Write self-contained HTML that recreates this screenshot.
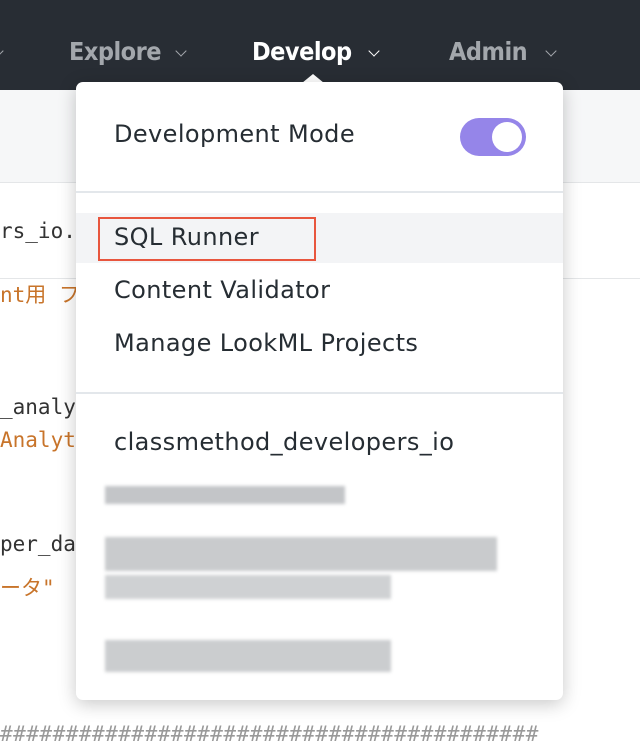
<!DOCTYPE html>
<html><head><meta charset="utf-8"><style>
*{margin:0;padding:0;box-sizing:border-box}
body{width:640px;height:748px;overflow:hidden;background:#fff;font-family:"DejaVu Sans","Liberation Sans",sans-serif;position:relative}
.nav{position:absolute;left:0;top:0;width:640px;height:90px;background:#282d34}
.nv{position:absolute;top:37px;font-size:25px;font-weight:bold;color:#a3a7ac;letter-spacing:-0.5px;font-family:"DejaVu Sans Condensed","DejaVu Sans",sans-serif}
.chev{position:absolute;top:47px;width:8px;height:8px;border-right:1.5px solid;border-bottom:1.5px solid;transform:rotate(45deg)}
.band{position:absolute;left:0;top:90px;width:640px;height:93px;background:#f6f7f8;border-bottom:1px solid #e4e6e8}
.l278{position:absolute;left:0;top:278px;width:640px;height:1px;background:#e4e6e8}
.code{position:absolute;left:0;font-family:"DejaVu Sans Mono","Noto Sans CJK JP",monospace;font-size:21px;white-space:nowrap}
.menu{position:absolute;left:76px;top:82px;width:487px;height:618px;background:#fff;border-radius:7px;box-shadow:0 4px 18px rgba(0,0,0,.22)}
.caret{position:absolute;left:302px;top:74px;width:0;height:0;border-left:11px solid transparent;border-right:11px solid transparent;border-bottom:9px solid #fff}
.it{position:absolute;left:38px;font-size:24px;letter-spacing:0.4px;color:#262d33;font-family:"DejaVu Sans","Liberation Sans",sans-serif;white-space:nowrap}
.div{position:absolute;left:0;width:487px;height:2px;background:#e3e7eb}
.bl{position:absolute;left:29px;background:#c3c5c8;filter:blur(1.5px)}
</style></head><body>
<div class="nav">
 <div class="chev" style="left:-6px;color:#a3a7ac"></div>
 <div class="nv" style="left:69px">Explore</div><div class="chev" style="left:177px;color:#a3a7ac"></div>
 <div class="nv" style="left:252px;color:#fff">Develop</div><div class="chev" style="left:370px;color:#fff"></div>
 <div class="nv" style="left:449px">Admin</div><div class="chev" style="left:547px;color:#a3a7ac"></div>
</div>
<div class="band"></div>
<div class="l278"></div>
<div class="code" style="top:219px;color:#333">rs_io.<span style="color:#7f8a96">m</span></div>
<div class="code" style="top:279px;color:#c8742a">nt用 フ</div>
<div class="code" style="top:395px;color:#333">_analy</div>
<div class="code" style="top:428px;color:#c8742a">Analyt</div>
<div class="code" style="top:532px;color:#333">per_da</div>
<div class="code" style="top:572px;color:#c8742a">ータ"</div>
<div class="code" style="top:722px;color:#999;letter-spacing:0.5px">#########################################</div>
<div class="caret"></div>
<div class="menu">
 <div class="it" style="top:38px">Development Mode</div>
 <div style="position:absolute;left:384px;top:36px;width:66px;height:38px;border-radius:19px;background:#9585e9"></div>
 <div style="position:absolute;left:416px;top:40px;width:30px;height:30px;border-radius:50%;background:#fff"></div>
 <div class="div" style="top:109px"></div>
 <div style="position:absolute;left:0;top:131px;width:487px;height:50px;background:#f3f4f6"></div>
 <div style="position:absolute;left:22px;top:135px;width:218px;height:44px;border:2px solid #e8563e"></div>
 <div class="it" style="top:141px">SQL Runner</div>
 <div class="it" style="top:194px">Content Validator</div>
 <div class="it" style="top:247px">Manage LookML Projects</div>
 <div class="div" style="top:310px"></div>
 <div class="it" style="top:346px">classmethod_developers_io</div>
 <div class="bl" style="top:404px;width:240px;height:18px"></div>
 <div class="bl" style="top:455px;width:392px;height:34px;background:#c9cbcd"></div>
 <div class="bl" style="top:493px;width:286px;height:24px;background:#cfd1d3"></div>
 <div class="bl" style="top:558px;width:286px;height:32px;background:#cbcdcf"></div>
</div>
</body></html>
